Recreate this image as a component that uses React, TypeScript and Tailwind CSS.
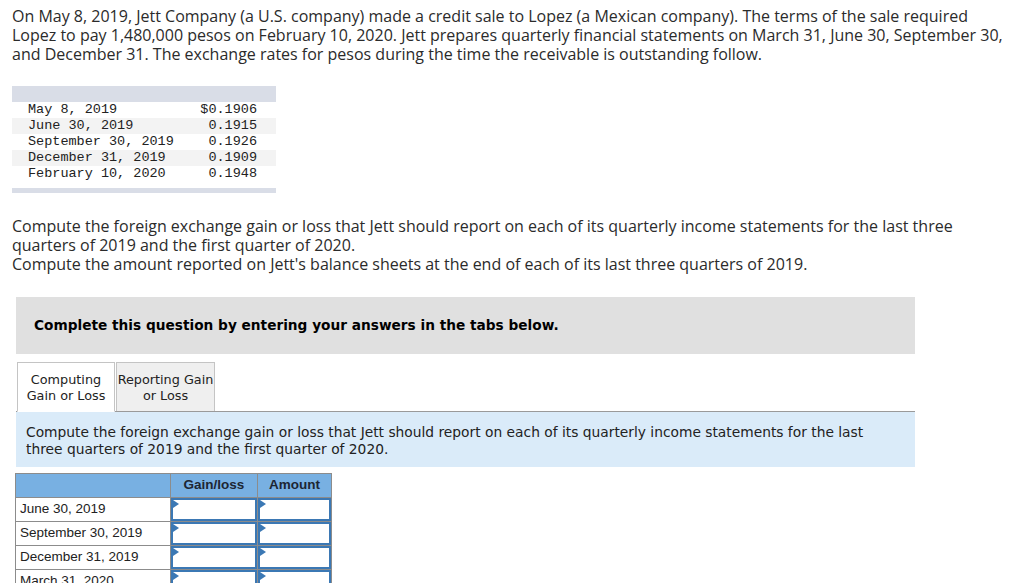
import * as React from "react";

const rates: [string, string][] = [
  ["May 8, 2019", "$0.1906"],
  ["June 30, 2019", "0.1915"],
  ["September 30, 2019", "0.1926"],
  ["December 31, 2019", "0.1909"],
  ["February 10, 2020", "0.1948"],
];

const rows = ["June 30, 2019", "September 30, 2019", "December 31, 2019", "March 31, 2020"];

function InputCell() {
  return (
    <td className="border border-[#8c8c8c] p-0 h-[24px]">
      <div className="relative h-[23px] border-2 border-[#3b78b4] bg-white">
        <span className="absolute left-0 top-0 w-0 h-0 border-y-[4px] border-y-transparent border-l-[6px] border-l-[#3b78b4]" />
      </div>
    </td>
  );
}

export default function App() {
  return (
    <div className="bg-white w-[1024px] h-[583px] overflow-hidden text-[#2b2b2b]">
      <div className="pl-3 pt-[7px] font-['Open_Sans',sans-serif] text-[16px] leading-[19px] whitespace-nowrap">
        <p>
          On May 8, 2019, Jett Company (a U.S. company) made a credit sale to Lopez (a Mexican company). The terms of the sale required
          <br />
          Lopez to pay 1,480,000 pesos on February 10, 2020. Jett prepares quarterly financial statements on March 31, June 30, September 30,
          <br />
          and December 31. The exchange rates for pesos during the time the receivable is outstanding follow.
        </p>
      </div>

      <div className="ml-3 mt-[22px] w-[264px] font-['Liberation_Mono',monospace] text-[13.5px] leading-[16px] text-[#222]">
        <div className="h-[16px] bg-[#d9dde7]" />
        {rates.map(([d, v], i) => (
          <div key={d} className={`flex justify-between pl-4 pr-[19px] ${i % 2 === 1 ? "bg-[#f3f3f3]" : "bg-white"}`}>
            <span>{d}</span>
            <span>{v}</span>
          </div>
        ))}
        <div className="mt-[6px] h-[5px] bg-[#d9dde7]" />
      </div>

      <div className="pl-3 pt-[24px] font-['Open_Sans',sans-serif] text-[16px] leading-[19px] whitespace-nowrap">
        <p>
          Compute the foreign exchange gain or loss that Jett should report on each of its quarterly income statements for the last three
          <br />
          quarters of 2019 and the first quarter of 2020.
        </p>
        <p>Compute the amount reported on Jett's balance sheets at the end of each of its last three quarters of 2019.</p>
      </div>

      <div className="ml-4 mt-[23px] w-[899px] h-[57px] bg-[#e0e0e0] flex items-center pl-[18px] font-['DejaVu_Sans',sans-serif] text-[13.7px] font-bold text-black">
        Complete this question by entering your answers in the tabs below.
      </div>

      <div className="ml-4 mt-2 w-[899px] font-['DejaVu_Sans',sans-serif] text-[12.8px] leading-[16px] text-[#222]">
        <div className="flex items-end border-b border-[#9a9a9a] pl-px gap-px">
          <div className="w-[98px] h-[50px] -mb-px pt-[2px] bg-white border border-[#c4c4c4] border-b-white flex items-center justify-center text-center">
            Computing
            <br />
            Gain or Loss
          </div>
          <div className="w-[99px] h-[49px] pt-[2px] bg-[#efefef] border border-[#c4c4c4] border-b-0 flex items-center justify-center text-center">
            Reporting Gain
            <br />
            or Loss
          </div>
        </div>
        <div className="bg-[#daebf9] h-[55px] pl-[10px] pt-[12px] text-[13.8px] leading-[17px]">
          Compute the foreign exchange gain or loss that Jett should report on each of its quarterly income statements for the last
          <br />
          three quarters of 2019 and the first quarter of 2020.
        </div>
      </div>

      <table className="ml-[15px] mt-[6px] border-collapse font-['Liberation_Sans',Arial,sans-serif] text-[13.5px] text-[#222]">
        <thead>
          <tr className="h-[24px] bg-[#78b0e2]">
            <th className="w-[155px] border border-[#8c8c8c]" />
            <th className="w-[87px] border border-[#8c8c8c] font-bold text-[#1d2633]">Gain/loss</th>
            <th className="w-[74px] border border-[#8c8c8c] font-bold text-[#1d2633]">Amount</th>
          </tr>
        </thead>
        <tbody>
          {rows.map((r) => (
            <tr key={r} className="h-[24px]">
              <td className="border border-[#8c8c8c] pl-[4px] py-0">{r}</td>
              <InputCell />
              <InputCell />
            </tr>
          ))}
        </tbody>
      </table>
    </div>
  );
}
